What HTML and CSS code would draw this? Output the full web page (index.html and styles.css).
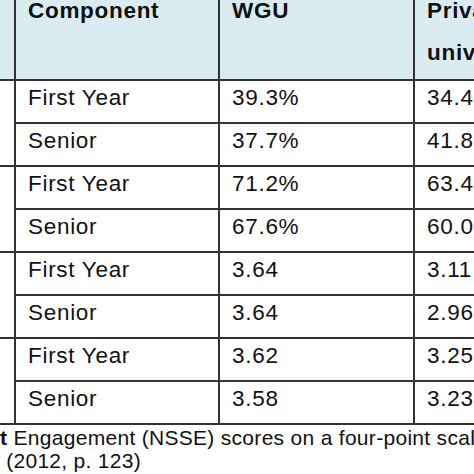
FILE: index.html
```html
<!DOCTYPE html>
<html lang="en">
<head>
    <meta charset="UTF-8">
    <title>NSSE scores</title>
    <link rel="stylesheet" href="styles.css">
</head>
<body>
    <div class="page">
        <table class="scores">
            <colgroup>
                <col class="c-group">
                <col class="c-comp">
                <col class="c-wgu">
                <col class="c-priv">
            </colgroup>
            <tr class="head">
                <th></th>
                <th>Component</th>
                <th>WGU</th>
                <th>Private<br>universities</th>
            </tr>
            <tr class="group-top">
                <td rowspan="2"></td>
                <td>First Year</td>
                <td>39.3%</td>
                <td>34.4%</td>
            </tr>
            <tr>
                <td>Senior</td>
                <td>37.7%</td>
                <td>41.8%</td>
            </tr>
            <tr class="group-top">
                <td rowspan="2"></td>
                <td>First Year</td>
                <td>71.2%</td>
                <td>63.4%</td>
            </tr>
            <tr>
                <td>Senior</td>
                <td>67.6%</td>
                <td>60.0%</td>
            </tr>
            <tr class="group-top">
                <td rowspan="2"></td>
                <td>First Year</td>
                <td>3.64</td>
                <td>3.11</td>
            </tr>
            <tr>
                <td>Senior</td>
                <td>3.64</td>
                <td>2.96</td>
            </tr>
            <tr class="group-top">
                <td rowspan="2"></td>
                <td>First Year</td>
                <td>3.62</td>
                <td>3.25</td>
            </tr>
            <tr class="last">
                <td>Senior</td>
                <td>3.58</td>
                <td>3.23</td>
            </tr>
        </table>
        <p class="caption"><b>t</b> Engagement (NSSE) scores on a four-point scale<br>&nbsp;(2012, p. 123)</p>
    </div>
</body>
</html>
```

FILE: styles.css
```css
body {
    margin: 0;
    padding: 0;
    background-color: #fff;
    color: #111;
    font-family: "Liberation Sans", Arial, sans-serif;
    overflow: hidden;
}
.page {
    width: 474px;
    height: 474px;
    overflow: hidden;
}
.scores {
    border-collapse: collapse;
    table-layout: fixed;
    width: 540px;
    margin-top: -10px;
    font-size: 22.5px;
    letter-spacing: 0.7px;
}
.c-group { width: 15px; }
.c-comp { width: 204px; }
.c-wgu { width: 195px; }
.c-priv { width: 126px; }

.scores th,
.scores td {
    border: 2px solid #333;
    text-align: left;
    vertical-align: top;
    padding: 0 0 0 12px;
    white-space: nowrap;
    overflow: hidden;
}
.scores th:first-child,
.scores td[rowspan] {
    border-left: none;
    padding: 0;
}
.head th {
    background-color: #daecf2;
    border-top: none;
    height: 89px;
    line-height: 42px;
    font-weight: bold;
}
.scores td {
    height: 43px;
    line-height: 24px;
    padding-top: 5px;
    box-sizing: border-box;
}
.caption {
    margin: 0;
    font-size: 21px;
    letter-spacing: 0.3px;
    line-height: 23px;
    padding-top: 1px;
    white-space: nowrap;
}
```
